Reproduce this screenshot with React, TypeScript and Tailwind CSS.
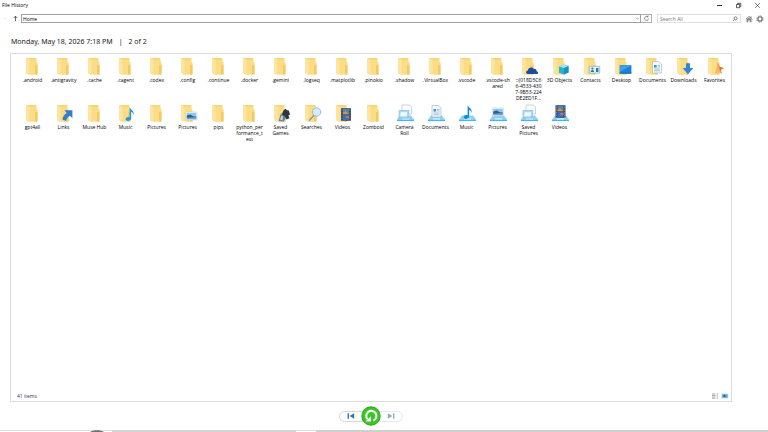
import type { ReactNode } from 'react';

type Kind =
  | 'plain' | 'cloud' | 'cube' | 'contact' | 'desktop' | 'document' | 'download' | 'favorite'
  | 'link' | 'music' | 'picture' | 'games' | 'search' | 'video'
  | 'libCamera' | 'libDocument' | 'libMusic' | 'libPicture' | 'libSaved' | 'libVideo';

interface Item {
  name: string;
  kind?: Kind;
}

const items: Item[] = [
  { name: '.android' },
  { name: '.antigravity' },
  { name: '.cache' },
  { name: '.cagent' },
  { name: '.codex' },
  { name: '.config' },
  { name: '.continue' },
  { name: '.docker' },
  { name: '.gemini' },
  { name: '.logseq' },
  { name: '.matplotlib' },
  { name: '.pinokio' },
  { name: '.shadow' },
  { name: '.VirtualBox' },
  { name: '.vscode' },
  { name: '.vscode-sh\nared' },
  { name: '::{018D5C6\n6-4533-430\n7-9B53-224\nDE2ED1F...', kind: 'cloud' },
  { name: '3D Objects', kind: 'cube' },
  { name: 'Contacts', kind: 'contact' },
  { name: 'Desktop', kind: 'desktop' },
  { name: 'Documents', kind: 'document' },
  { name: 'Downloads', kind: 'download' },
  { name: 'Favorites', kind: 'favorite' },
  { name: 'gpt4all' },
  { name: 'Links', kind: 'link' },
  { name: 'Muse Hub' },
  { name: 'Music', kind: 'music' },
  { name: 'Pictures' },
  { name: 'Pictures', kind: 'picture' },
  { name: 'pips' },
  { name: 'python_per\nformance_t\nest' },
  { name: 'Saved\nGames', kind: 'games' },
  { name: 'Searches', kind: 'search' },
  { name: 'Videos', kind: 'video' },
  { name: 'Zomboid' },
  { name: 'Camera\nRoll', kind: 'libCamera' },
  { name: 'Documents', kind: 'libDocument' },
  { name: 'Music', kind: 'libMusic' },
  { name: 'Pictures', kind: 'libPicture' },
  { name: 'Saved\nPictures', kind: 'libSaved' },
  { name: 'Videos', kind: 'libVideo' },
];

const Folder = () => (
  <>
    <path d="M3 1h10.4v4l1 .6v11.8H5.4L3 16z" fill="#f5d578" />
    <path d="M3 1l3.8 1.7v14.8L3 16z" fill="#fbe5a0" />
    <path d="M6.8 2.7h6.4v3.5l1.2.5v10.8H6.8z" fill="#fcdd85" />
    <path d="M12 8.2h2.4v9.3H12z" fill="#f1ca66" />
  </>
);

const Tray = () => (
  <>
    <path d="M5 11.5h11l3 4H2z" fill="#8fd3f2" />
    <path d="M2 15.5h17v1.6H2z" fill="#4eb2e4" />
    <path d="M7 14.3h7v1.2H7z" fill="#d7f1fc" />
  </>
);

const Note = ({ color }: { color: string }) => (
  <path d="M12.6 3c.4 2.6 5 3.3 4 8-.4-1.8-1.4-2.8-2.4-3.2v6.5c0 3-5.6 3.8-5.6 1 0-1.8 2.3-2.6 4-2V3z" fill={color} />
);

const Photo = () => (
  <>
    <path d="M8 8h11v8H8z" fill="#fff" stroke="#bac6d0" strokeWidth=".5" />
    <path d="M8.8 8.8h9.4v6.4H8.8z" fill="#8fc8ee" />
    <path d="M8.8 11.4l3.4-.9 3 1.7 3 .3v1.5H8.8z" fill="#34607c" />
    <path d="M8.8 13.8l9.4-.7v2.1H8.8z" fill="#6aa4d2" />
  </>
);

const Page = () => (
  <>
    <path d="M9.5 4.5h6l3 2.6V16h-9z" fill="#f7fafc" stroke="#9fb0bd" strokeWidth=".6" />
    <path d="M11 8h2.6v2.6H11z" fill="#3d95d1" />
    <path d="M14.5 8.5h2.6M14.5 10h2.6M11 12h6M11 13.8h6" stroke="#72a9cf" strokeWidth=".7" />
  </>
);

const Film = () => (
  <>
    <path d="M8 4.2h10v12.6H8z" fill="#3a4552" />
    <path d="M10 5h6v5.2h-6z" fill="#4f83b0" />
    <path d="M10 10.9h6v5.1h-6z" fill="#3370cc" />
    <path d="M10 8.5l2.8-1.2 3.2 2.9h-6z" fill="#c79a4a" />
    <path d="M12.8 12.2H16v1.8h-3.2z" fill="#d9744c" />
    <path d="M9 4.6v12M17 4.6v12" stroke="#a9b4c0" strokeWidth=".7" strokeDasharray=".8 .8" />
  </>
);

const Printer = () => (
  <>
    <path d="M7 1h7.5l2 2v7H7z" fill="#fafdff" stroke="#a9b8c4" strokeWidth=".6" />
    <path d="M4 6.5h10l-1 7.5H4z" fill="#a9daf2" stroke="#7cb5d6" strokeWidth=".6" />
    <path d="M5.6 8.2h6.6l-.6 4H5.4z" fill="#eef9fe" />
  </>
);

const art: Record<Kind, ReactNode> = {
  plain: <Folder />,
  cloud: (
    <>
      <Folder />
      <path d="M9 17c-2.4 0-2.6-3.3-.1-3.5.2-3.2 4.2-4.2 5.6-1.7 2-.4 3.3.9 3.1 2.4 2 .2 1.8 2.8.1 2.8z" fill="#174f9c" />
    </>
  ),
  cube: (
    <>
      <Folder />
      <path d="M9 9.6l4.3-1.8 5.2 1.2v6.4l-4.4 2L9 15.8z" fill="#23b2d4" />
      <path d="M9 9.6l4.3-1.8 5.2 1.2-4.4 1.9z" fill="#9ce9f5" />
      <path d="M14.1 10.9L18.5 9v6.4l-4.4 2z" fill="#1792bd" />
    </>
  ),
  contact: (
    <>
      <Folder />
      <path d="M8.3 9.3h10.4v6.9H8.3z" fill="#e4f1f9" stroke="#7fadc9" strokeWidth=".7" />
      <circle cx="11.4" cy="11.6" r="1.1" fill="#2a7ab0" />
      <path d="M9.7 15c0-2.6 3.4-2.6 3.4 0zM15 11h2.4v4H15z" fill="#2a7ab0" />
    </>
  ),
  desktop: (
    <>
      <Folder />
      <path d="M7.6 8.2h11.8v8.4H7.6z" fill="#1783d6" />
      <path d="M8.2 8.8h10.6L8.2 15z" fill="#3aa3ec" />
      <path d="M7.6 15.6h11.8v1H7.6z" fill="#0d69b5" />
    </>
  ),
  document: <><Folder /><Page /></>,
  download: (
    <>
      <Folder />
      <path d="M12 6.3h4v4.7h3.4L14 17.2 8.6 11H12z" fill="#2f86dc" />
    </>
  ),
  favorite: (
    <>
      <Folder />
      <path d="M12.3 5l2.2 4.8 4.3 1.2-3 2 1 4.2-3.6-2.4-3.4 2.6 1.4-5z" fill="#f6b26b" />
      <path d="M12.3 5l2.2 4.8 4.3 1.2-3 2 1 4.2-1.8-3.6z" fill="#e5762f" />
    </>
  ),
  link: (
    <>
      <Folder />
      <path d="M10.4 6.2h8v8l-2.5-2.4c-2.2 1.3-3.5 3-3.9 5.2l-3.6-1.4c.4-3 1.8-5 4.4-6.6z" fill="#2e7fd0" />
    </>
  ),
  music: <><Folder /><g transform="translate(1 0)"><Note color="#1d9ae0" /></g></>,
  picture: <><Folder /><Photo /></>,
  games: (
    <>
      <Folder />
      <path d="M7.6 17.2l1.7-6.2 2.2-2.8 2.5 2.2.5 4.6-2 2.5z" fill="#64849a" />
      <path d="M12.4 6.4l2-1.6 1.6 1.4 1.8.2 1.2 4-1.6 1.2 1 2.6-2.8 1.4-2.4-4-2-.8z" fill="#2c343c" />
      <path d="M9.2 15.8l1.2-4.4 1.5 1-.4 4z" fill="#c3d8e4" />
    </>
  ),
  search: (
    <>
      <Folder />
      <path d="M11.8 11.4L7.4 16.2" stroke="#8b979f" strokeWidth="1.5" strokeLinecap="round" />
      <circle cx="14.6" cy="8" r="4.2" fill="#d3edfa" stroke="#94b7ca" strokeWidth=".9" />
    </>
  ),
  video: <><Folder /><Film /></>,
  libCamera: <><Tray /><Printer /></>,
  libDocument: <><Tray /><g transform="translate(-3.5 -3)"><Page /></g></>,
  libMusic: <><Tray /><g transform="translate(-2 -2)"><Note color="#128bd8" /></g></>,
  libPicture: <><Tray /><g transform="translate(-3.5 -4)"><Photo /></g></>,
  libSaved: <><Tray /><Printer /></>,
  libVideo: <><Tray /><g transform="translate(-2.5 -3)"><Film /></g></>,
};

function FileItem({ name, kind = 'plain' }: Item) {
  return (
    <li>
      <button type="button" className="flex w-full flex-col items-center gap-0.5">
        <svg viewBox="0 0 20 18" className="h-[18px] w-5" aria-hidden="true">{art[kind]}</svg>
        <span className="text-center text-[5px] leading-[6px] whitespace-pre">{name}</span>
      </button>
    </li>
  );
}

function TitleBar() {
  return (
    <header className="flex h-2.5 items-center justify-between pr-[7px] pl-0.5">
      <h1 className="text-[5px] leading-[6px]">File History</h1>
      <div className="flex items-center gap-3">
        <button type="button" aria-label="Minimize">
          <svg viewBox="0 0 7 7" className="size-[7px]"><path d="M1 3.5h5" stroke="#333" strokeWidth="1" /></svg>
        </button>
        <button type="button" aria-label="Restore">
          <svg viewBox="0 0 7 7" className="size-[7px]" fill="none" stroke="#333" strokeWidth=".8">
            <path d="M1.5 2.5h3.2v3.2H1.5zM2.6 2.3v-1h3.2v3.2h-1" />
          </svg>
        </button>
        <button type="button" aria-label="Close">
          <svg viewBox="0 0 7 7" className="size-[7px]"><path d="M1.2 1.2l4.6 4.6M5.8 1.2L1.2 5.8" stroke="#333" strokeWidth=".7" /></svg>
        </button>
      </div>
    </header>
  );
}

function AddressBar() {
  return (
    <nav className="mt-1 flex h-[9px] items-stretch pr-1 pl-[3px]">
      <button type="button" aria-label="Back" className="flex w-2 items-center">
        <svg viewBox="0 0 5 5" className="size-[5px]"><path d="M.5 2.5h3" stroke="#ddd" strokeWidth=".6" /></svg>
      </button>
      <button type="button" aria-label="Up" className="flex w-2.5 items-center">
        <svg viewBox="0 0 7 7" className="size-[7px]" fill="none" stroke="#444" strokeWidth=".8">
          <path d="M4.5 6.2V1.2M2.7 3l1.8-1.8L6.3 3" />
        </svg>
      </button>
      <div className="flex flex-1 items-center border border-[#a0a0a0]">
        <input
          aria-label="Address"
          defaultValue="Home"
          className="min-w-0 flex-1 px-px text-[5px] leading-[6px] outline-none"
        />
        <button type="button" aria-label="Previous locations" className="flex items-center">
          <svg viewBox="0 0 5 5" className="size-[5px]"><path d="M1 1.7l1.5 1.6L4 1.7" fill="none" stroke="#777" strokeWidth=".6" /></svg>
        </button>
      </div>
      <button type="button" aria-label="Refresh" className="flex w-[11px] items-center justify-center border border-l-0 border-[#b0b0b0]">
        <svg viewBox="0 0 7 7" className="size-[7px]" fill="none" stroke="#666" strokeWidth=".7">
          <path d="M4.9 2A2 2 0 1 0 5.5 3.6M3.5 1.7h1.6V.4" />
        </svg>
      </button>
      <div className="ml-[5px] flex w-[84px] items-center border border-[#e2e2e2] pr-0.5 pl-0.5">
        <input
          type="search"
          aria-label="Search All"
          placeholder="Search All"
          className="min-w-0 flex-1 text-[5px] leading-[6px] outline-none placeholder:text-[#757575]"
        />
        <svg viewBox="0 0 6 6" className="size-1.5" fill="none" stroke="#555" strokeWidth=".7">
          <circle cx="3.6" cy="2.3" r="1.5" />
          <path d="M2.5 3.4L.8 5.2" />
        </svg>
      </div>
      <button type="button" aria-label="Home" className="ml-1 flex items-center">
        <svg viewBox="0 0 8 8" className="size-2" fill="#7c7c7c">
          <path d="M4 .9L.4 4.2l.6.6L4 2.1l3 2.7.6-.6-1.1-1V1.4h-1v.9z" />
          <path d="M1.6 4.8L4 2.7l2.4 2.1v2.5H4.8V5.2H3.2v2.1H1.6z" />
        </svg>
      </button>
      <button type="button" aria-label="Settings" className="ml-[3px] flex items-center">
        <svg viewBox="0 0 8 8" className="size-2" fill="none" stroke="#7c7c7c">
          <circle cx="4" cy="4" r="3.1" strokeWidth="1" strokeDasharray="1.4 1.03" />
          <circle cx="4" cy="4" r="2.1" strokeWidth="1.3" />
        </svg>
      </button>
    </nav>
  );
}

function Playback() {
  return (
    <div className="mt-1 flex items-center justify-center pr-[26px] pb-1">
      <button type="button" aria-label="Previous version" className="-mr-0.5 flex h-[11px] w-6 items-center justify-center rounded-l-full border border-[#d2d6da]">
        <svg viewBox="0 0 8 6" className="h-1.5 w-2" fill="#2277b5"><path d="M.6.3H2v5.4H.6zM7.2.3v5.4L2.6 3z" /></svg>
      </button>
      <button type="button" aria-label="Restore" className="z-10">
        <svg viewBox="0 0 20 20" className="size-5">
          <circle cx="10" cy="10" r="9.7" fill="#2aa81a" />
          <circle cx="10" cy="10" r="8.8" fill="#3cc626" />
          <path d="M12.4 14.6A5.1 5.1 0 1 0 6.6 13.4" fill="none" stroke="#fff" strokeWidth="2" />
          <path d="M4.6 15.4h5.2v-5.2z" fill="#fff" />
        </svg>
      </button>
      <button type="button" aria-label="Next version" className="-ml-0.5 flex h-[11px] w-6 items-center justify-center rounded-r-full border border-[#e6e8ea]">
        <svg viewBox="0 0 8 6" className="h-1.5 w-2" fill="#8faabd"><path d="M6 .3h1.4v5.4H6zM.8.3v5.4L5.4 3z" /></svg>
      </button>
    </div>
  );
}

export default function App() {
  return (
    <div className="flex h-screen flex-col overflow-hidden bg-white font-['Open_Sans','Noto_Sans',sans-serif] text-black">
      <TitleBar />
      <AddressBar />
      <h2 className="mt-[13px] ml-[11px] flex gap-1.5 font-['Noto_Sans','Open_Sans',sans-serif] text-[7px] leading-3 text-[#222]">
        <span>Monday, May 18, 2026 7:18 PM</span>
        <span>|</span>
        <span>2 of 2</span>
      </h2>
      <main className="mt-[5px] mr-9 ml-2.5 flex flex-1 flex-col border border-[#dcdcdc]">
        <ul className="grid flex-1 grid-cols-[repeat(auto-fill,31px)] content-start gap-y-[3px] pt-[3px] pl-[6px]">
          {items.map((item, i) => (
            <FileItem key={i} {...item} />
          ))}
        </ul>
        <footer className="flex h-2.5 items-center justify-between pr-0.5 pl-[6px]">
          <span className="text-[5px] leading-[6px] text-[#2c3a53]">41 items</span>
          <div className="flex gap-0.5">
            <button type="button" aria-label="Details view">
              <svg viewBox="0 0 8 6" className="h-1.5 w-2" fill="#a8a8a8">
                <path d="M1 .5h3.4v1H1zM1 2h3.4v1H1zM1 3.5h3.4v1H1zM1 5h3.4v.8H1zM5.6.5h1.6v1H5.6zM5.6 2.5h1.6v1H5.6zM5.6 4.5h1.6v1H5.6z" />
              </svg>
            </button>
            <button type="button" aria-label="Large icons view">
              <svg viewBox="0 0 8 6" className="h-1.5 w-2">
                <path d="M.5.5h6.8v5H.5z" fill="#b5dcf3" />
                <path d="M1.2 1.2h5.4v3.6H1.2z" fill="#6faed6" />
                <path d="M1.6 3.6l1.8-1.8 2 1.8z" fill="#24425c" />
              </svg>
            </button>
          </div>
        </footer>
      </main>
      <Playback />
      {/* top edge of the taskbar */}
      <div className="flex h-0.5 items-end border-t border-[#e0e0e0]">
        <svg viewBox="0 0 14 2" className="ml-[90px] h-0.5 w-3.5 shrink-0"><path d="M0 2C3-.4 11-.4 14 2z" fill="#6d7768" /></svg>
        <div className="ml-2 h-0.5 w-[184px] bg-[#d4d4d4]" />
        <div className="ml-5 h-0.5 flex-1 bg-[#cfcfcf]" />
      </div>
    </div>
  );
}
